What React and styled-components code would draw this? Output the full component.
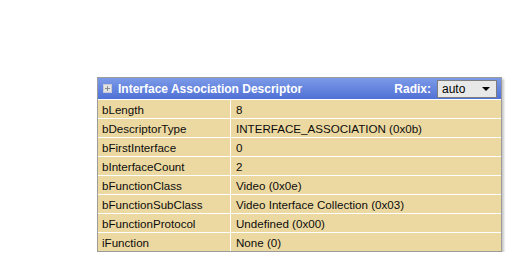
import React from "react";
import styled, { createGlobalStyle } from "styled-components";

const Global = createGlobalStyle`
  html, body { margin: 0; padding: 0; background: #ffffff; }
  body { font-family: "Liberation Sans", Arial, sans-serif; }
`;

const Page = styled.div`
  padding: 77px 0 0 97px;
`;

const Panel = styled.div`
  width: 403px;
  border: 1px solid #9c9c9c;
  background: #ffffff;
  box-shadow: 2px 2px 2px rgba(0, 0, 0, 0.22);
`;

const Header = styled.div`
  height: 21px;
  display: flex;
  align-items: center;
  padding: 0 4px 0 5px;
  background: linear-gradient(#7b9ae8, #5071d5);
  color: #ffffff;
  font-size: 12px;
  font-weight: bold;
`;

const Toggle = styled.span`
  width: 7px;
  height: 7px;
  border: 1px solid #c8cbd6;
  background: #e4e4e4;
  position: relative;
  flex: none;
  &::before, &::after {
    content: "";
    position: absolute;
    background: #8a8a8a;
  }
  &::before { left: 1px; right: 1px; top: 3px; height: 1px; }
  &::after { top: 1px; bottom: 1px; left: 3px; width: 1px; }
`;

const Title = styled.span`
  margin-left: 6px;
  flex: 1;
`;

const RadixLabel = styled.span`
  margin-right: 6px;
`;

const Select = styled.div`
  height: 16px;
  width: 48px;
  border: 1px solid #7d7d7d;
  background: #e8e8e8;
  display: flex;
  align-items: center;
  justify-content: space-between;
  padding: 0 6px 0 4px;
  color: #000000;
  font-weight: normal;
  font-size: 12px;
  box-sizing: content-box;
`;

const Arrow = styled.span`
  width: 0;
  height: 0;
  border-left: 4px solid transparent;
  border-right: 4px solid transparent;
  border-top: 4px solid #000000;
`;

const Grid = styled.div`
  display: grid;
  grid-template-columns: 132px 1fr;
  gap: 1px;
  padding-top: 1px;
  background: #ffffff;
`;

const Cell = styled.div`
  height: 18px;
  box-sizing: border-box;
  padding-top: 2px;
  line-height: 16px;
  background: #ecd9a1;
  color: #0c0c0c;
  font-size: 11.6px;
  padding-left: ${(p) => (p.$value ? "5px" : "4px")};
  white-space: nowrap;
`;

const rows = [
  ["bLength", "8"],
  ["bDescriptorType", "INTERFACE_ASSOCIATION (0x0b)"],
  ["bFirstInterface", "0"],
  ["bInterfaceCount", "2"],
  ["bFunctionClass", "Video (0x0e)"],
  ["bFunctionSubClass", "Video Interface Collection (0x03)"],
  ["bFunctionProtocol", "Undefined (0x00)"],
  ["iFunction", "None (0)"],
];

export default function App() {
  return (
    <Page>
      <Global />
      <Panel>
        <Header>
          <Toggle />
          <Title>Interface Association Descriptor</Title>
          <RadixLabel>Radix:</RadixLabel>
          <Select>
            <span>auto</span>
            <Arrow />
          </Select>
        </Header>
        <Grid>
          {rows.map(([k, v]) => (
            <React.Fragment key={k}>
              <Cell>{k}</Cell>
              <Cell $value>{v}</Cell>
            </React.Fragment>
          ))}
        </Grid>
      </Panel>
    </Page>
  );
}
